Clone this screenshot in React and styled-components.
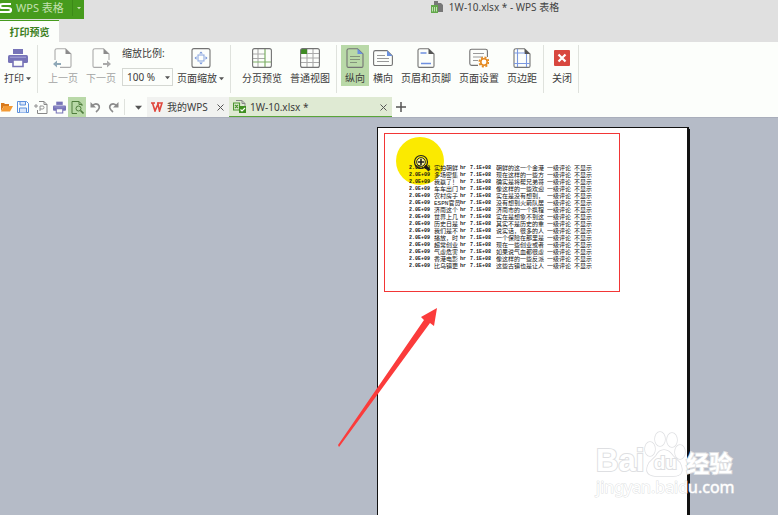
import styled, { createGlobalStyle } from "styled-components";
import { useState } from "react";

const GlobalStyle = createGlobalStyle`
  * {
    box-sizing: border-box;
  }
  body {
    margin: 0;
    overflow: hidden;
    font-family: "Noto Sans", "Noto Sans CJK SC", sans-serif;
    font-size: 10px;
    line-height: 14px;
    color: #3c3c3c;
  }
  button, select {
    font: inherit;
    color: inherit;
    border: 0;
    padding: 0;
    background: none;
  }
`;

const Page = styled.div`
  display: flex;
  flex-direction: column;
  height: 100vh;
  background: #e0e0e0;
`;

const TitleBar = styled.header`
  display: grid;
  grid-template-columns: 1fr auto 1fr;
  align-items: start;
  height: 20px;
`;

const Brand = styled.button`
  justify-self: start;
  display: flex;
  align-items: center;
  width: 84px;
  height: 19px;
  padding-bottom: 3px;
  background: #469b1d;
  color: #c3e0b0;
  font-size: 11px;
  gap: 4px;
  white-space: nowrap;
`;

const BrandMenu = styled.span`
  display: flex;
  align-items: center;
  margin-left: auto;
  padding: 0 3px 0 4px;
  height: 16px;
  border-left: 1px solid #3c8a18;
`;

const Title = styled.h1`
  display: flex;
  gap: 6px;
  margin: 0 0 0 212px;
  font-size: 10px;
  font-weight: 400;
  line-height: 14px;
  color: #444;
  white-space: nowrap;
`;

const RibbonTabs = styled.nav`
  display: flex;
  height: 22px;
`;

const RibbonTab = styled.button`
  width: 59px;
  border-top: 1px solid #469b1d;
  background: #fcfefb;
  color: #3c7f1e;
  font-weight: 700;
`;

const Ribbon = styled.div`
  display: flex;
  align-items: flex-start;
  height: 55px;
  padding-top: 3px;
  background: #fcfefb;
`;

const Divider = styled.span`
  width: 1px;
  height: ${(p) => p.height || 48}px;
  margin: 0 4px 0 2px;
  background: #dfe2dd;
`;

const Group = styled.div`
  display: flex;
  padding-right: ${(p) => p.$end || 0}px;
`;

const Tool = styled.button`
  display: flex;
  flex-direction: column;
  align-items: center;
  gap: 3px;
  height: 41px;
  padding: 3px 4px 0;
  background: ${(p) => (p.$active ? "#b9d9a8" : "transparent")};
  color: ${(p) => (p.disabled ? "#a3a3a3" : "#3c3c3c")};
  white-space: nowrap;
`;

const ToolLabel = styled.span`
  display: flex;
  align-items: center;
  gap: 2px;
`;

const Scale = styled.div`
  display: flex;
  flex-direction: column;
  gap: 8px;
  padding: 1px 0 0 2px;
`;

const SelectBox = styled.span`
  display: flex;
  align-items: center;
  width: 51px;
  height: 18px;
  padding: 0 2px 0 4px;
  border: 1px solid #d5d8d3;
`;

const Select = styled.select`
  flex: 1;
  min-width: 0;
  appearance: none;
  outline: none;
`;

const QuickBar = styled.div`
  display: flex;
  align-items: center;
  height: 20px;
  background: #fcfefb;
`;

const QuickButton = styled.button`
  display: grid;
  place-items: center;
  width: ${(p) => (p.$narrow ? 14 : 18)}px;
  height: 20px;
  background: ${(p) => (p.$active ? "#b9d9a8" : "transparent")};
`;

const DocTab = styled.div`
  display: flex;
  align-items: center;
  gap: 4px;
  width: ${(p) => p.width}px;
  height: 20px;
  padding: 0 5px 0 4px;
  background: ${(p) => (p.$active ? "#dfead3" : "#f1f2f0")};
  border-bottom: 1px solid ${(p) => (p.$active ? "#5aa53a" : "#f1f2f0")};
`;

const TabName = styled.button`
  flex: 1;
  text-align: left;
  white-space: nowrap;
`;

const Workspace = styled.main`
  position: relative;
  flex: 1;
  min-height: 0;
  overflow: hidden;
  padding: 9px 0 0 377px;
  border-top: 1px solid #a9aebb;
  background: #b5bbc7;
`;

const Paper = styled.section`
  width: 312px;
  height: 440px;
  padding: 5px 6px;
  background: #fff;
  border: 1px solid #111;
  border-right-width: 2px;
  box-shadow: 1px 2px 0 #111;
`;

const PrintArea = styled.div`
  position: relative;
  width: 236px;
  height: 159px;
  padding: 31px 0 0 24px;
  border: 1px solid #f23636;
`;

const Sheet = styled.table`
  position: relative;
  table-layout: fixed;
  width: 186px;
  border-collapse: collapse;
  font-family: "Liberation Mono", "Noto Sans CJK SC", monospace;
  line-height: 7px;
  color: #111;
`;

const Cell = styled.td`
  height: 7px;
  padding: 0;
  overflow: hidden;
  white-space: nowrap;
  font-size: ${(p) => (p.$number ? 5 : 6)}px;
  font-weight: ${(p) => (p.$number ? 700 : 400)};
`;

const Highlight = styled.div`
  position: absolute;
  left: 11px;
  top: 3px;
  width: 48px;
  height: 48px;
  padding: 4px 0 0 3px;
  display: grid;
  place-items: center;
  border-radius: 50%;
  background: #fbea00;
`;

const Arrow = styled.svg`
  position: absolute;
  left: 337px;
  top: 190px;
`;

const Watermark = styled.div`
  position: absolute;
  left: 596px;
  top: 313px;
  color: #fff;
  paint-order: stroke fill;
`;

const WatermarkLogo = styled.div`
  display: flex;
  align-items: flex-end;
  height: 46px;
  font-family: "Liberation Sans", "Noto Sans CJK SC", sans-serif;
  font-size: 31px;
  font-weight: 700;
  line-height: 32px;
  -webkit-text-stroke: 2px #dedfe2;
`;

const Paw = styled.span`
  display: grid;
  width: 42px;
  height: 46px;
  font-size: 19px;
  line-height: 20px;
  > * {
    grid-area: 1 / 1;
  }
  > span {
    align-self: end;
    justify-self: center;
    padding-bottom: 4px;
  }
`;

const WatermarkName = styled.span`
  font-size: 23px;
  line-height: 26px;
`;

const WatermarkUrl = styled.div`
  font-size: 16px;
  font-weight: 400;
  line-height: 20px;
  -webkit-text-stroke: 1px #dedfe2;
`;

const Caret = ({ color = "#555", size = 5 }) => (
  <svg width={size} height={size} viewBox="0 0 6 6">
    <path d="M0 1.5h6L3 5z" fill={color} />
  </svg>
);

const Icon = ({ size = 20, children }) => (
  <svg
    width={size}
    height={size}
    viewBox="0 0 20 20"
    fill="none"
    stroke="#737373"
    strokeWidth="1.1"
  >
    {children}
  </svg>
);

const PrintIcon = ({ size }) => (
  <Icon size={size}>
    <path d="M5 1h10v5H5z" fill="#7774b8" stroke="none" />
    <rect x="0" y="7" width="20" height="8" rx="1.5" fill="#7774b8" stroke="none" />
    <path d="M2 9.2h16" stroke="#a5a3d6" />
    <path d="M5 12h10v6.5H5z" fill="#fcfefb" stroke="#7774b8" strokeWidth="1.6" />
  </Icon>
);

const PageOutline = ({ corner = "#8b8b8b" }) => (
  <>
    <path d="M4 .7h8.5L18 6v12q0 1.4-1.4 1.4H3.4Q2 19.4 2 18V2.3Q2 .7 4 .7z" />
    <path d="M12.5 .7V6H18z" fill={corner} stroke="none" />
  </>
);

const PrevIcon = () => (
  <Icon>
    <path d="M2 12V2.3Q2 .7 4 .7h8.5L18 6v12q0 1.4-1.4 1.4H7" stroke="#aaa" />
    <path d="M12.5 .7V6H18z" fill="#8b8b8b" stroke="none" />
    <path d="M0 16l4-3.5v2.5h4v2H4v2.5z" fill="#8fa9b8" stroke="none" />
  </Icon>
);

const NextIcon = () => (
  <Icon>
    <path d="M11 19.4H3.4Q2 19.4 2 18V2.3Q2 .7 4 .7h8.5L18 6v6" stroke="#aaa" />
    <path d="M12.5 .7V6H18z" fill="#8b8b8b" stroke="none" />
    <path d="M20 16l-4-3.5v2.5h-4v2h4v2.5z" fill="#aaa" stroke="none" />
  </Icon>
);

const PageZoomIcon = () => (
  <Icon>
    <rect x="1" y=".6" width="18" height="18.8" rx="2" />
    <rect x="7" y="7" width="6" height="6" stroke="#8fa9e0" />
    <path d="M10 3.5l1.800 2H8.200zM10 16.500l1.800-2H8.200zM3.500 10l2-1.800v3.600zM16.500 10l-2-1.800v3.600z" fill="#6f90d8" stroke="none" />
  </Icon>
);

const PageBreakIcon = () => (
  <Icon>
    <path d="M6 1v18M1 6h12M1 10.5h12" stroke="#aaa" />
    <path d="M13 1v13M1 14h18M13 14v5" stroke="#7db066" strokeWidth="1.2" />
    <rect x=".6" y=".6" width="18.8" height="18.8" rx="2" />
  </Icon>
);

const NormalViewIcon = () => (
  <Icon>
    <path d="M7 1v18M13 1v18M1 5.5h18M1 10h18M1 14.5h18" stroke="#aaa" />
    <path d="M1 1h6v5H1z" fill="#3f8b24" stroke="none" />
    <rect x=".6" y=".6" width="18.8" height="18.8" rx="2" />
  </Icon>
);

const PortraitIcon = () => (
  <Icon>
    <PageOutline corner="#6a91e0" />
    <path d="M5 8.5h10M5 11.5h10M5 14.5h7" stroke="#83947c" />
  </Icon>
);

const LandscapeIcon = () => (
  <Icon>
    <path d="M2.5 2.6H14L19.4 8v8q0 1.5-1.5 1.5H2.1Q.6 17.5 .6 16V4.5Q.6 2.6 2.5 2.6z" />
    <path d="M14 2.6V8h5.4z" fill="#6a91e0" stroke="none" />
    <path d="M4 7.5h8M4 10.5h12M4 13.5h12" stroke="#999" />
  </Icon>
);

const HeaderFooterIcon = () => (
  <Icon>
    <PageOutline corner="#555" />
    <path d="M4.5 5h6M5 15.5h10" stroke="#6f90e0" strokeWidth="1.7" />
  </Icon>
);

const PageSetupIcon = () => (
  <Icon>
    <path d="M9 17.4H2.6Q.8 17.4 .8 15.5V3Q.8 1.3 2.6 1.3h14q1.8 0 1.8 1.7v6" />
    <path d="M4 5.5h11M4 9h10M4 12.5h5" stroke="#999" />
    <circle cx="15" cy="14" r="4.6" stroke="#e58a20" strokeWidth="1.8" strokeDasharray="2 1.6" />
    <circle cx="15" cy="14" r="3.2" stroke="#e58a20" strokeWidth="1.6" fill="#fff" />
  </Icon>
);

const MarginIcon = () => (
  <Icon>
    <PageOutline corner="#555" />
    <path d="M5.5 1v18M14.5 6v13M2 5h11M2 15.5h16" stroke="#7b98df" />
  </Icon>
);

const CloseIcon = () => (
  <Icon>
    <rect x="2" y="2" width="16" height="16" rx="1" fill="#d8473f" stroke="none" />
    <path d="M6.5 6.5l7 7M13.5 6.5l-7 7" stroke="#fff" strokeWidth="2.2" />
  </Icon>
);

const FolderIcon = () => (
  <svg width="12" height="12" viewBox="0 0 12 12">
    <path d="M0 2h3l1 1h4v2H3L0 10z" fill="#d87a1c" />
    <path d="M3 5h9l-3 5.5H0z" fill="#f39a34" />
  </svg>
);

const SaveIcon = () => (
  <svg width="12" height="12" viewBox="0 0 12 12" fill="none" stroke="#5b8fdc">
    <path d="M.5 .5h9l2 2v9H.5z" />
    <path d="M3 .5h5.5v3.500H3zM2.500 11.500V7h7v4.500" fill="#d7e5fa" />
  </svg>
);

const ExportIcon = () => (
  <svg width="14" height="13" viewBox="0 0 14 13" fill="none" stroke="#888">
    <path d="M5 .5h5l3 3v9H3.5V9M10 .5v3h3" />
    <path d="M6 10V5h2.5q1.5 0 1.5 1.5T8.500 8H6M0 5h4M2 3v4" strokeWidth=".9" />
  </svg>
);

const PreviewIcon = () => (
  <svg width="13" height="13" viewBox="0 0 13 13" fill="none" stroke="#4f7d3d">
    <path d="M6 12.5H1V.5h7l3 3V5M8 .5v3h3" />
    <circle cx="7.5" cy="7.5" r="2.5" />
    <path d="M9.5 9.5l3 3" strokeWidth="1.6" />
  </svg>
);

const UndoIcon = ({ flip }) => (
  <svg width="11" height="12" viewBox="0 0 11 12" fill="none" stroke="#8b8b8b" strokeWidth="1.7">
    <g transform={flip ? "translate(11 0) scale(-1 1)" : undefined}>
      <path d="M2 5q3-3.5 6-1.5 3.5 3-2 7.5" />
      <path d="M.5 1v5.5H6z" fill="#8b8b8b" stroke="none" />
    </g>
  </svg>
);

const CrossIcon = () => (
  <svg width="7" height="7" viewBox="0 0 7 7" stroke="#555">
    <path d="M.5 .5l6 6M6.5 .5l-6 6" />
  </svg>
);

const tools = [
  { end: 2, items: [{ label: "打印", icon: PrintIcon, menu: true }] },
  {
    end: 3,
    items: [
      { label: "上一页", icon: PrevIcon, disabled: true },
      { label: "下一页", icon: NextIcon, disabled: true },
      { scale: true },
      { label: "页面缩放", icon: PageZoomIcon, menu: true },
    ],
  },
  {
    items: [
      { label: "分页预览", icon: PageBreakIcon },
      { label: "普通视图", icon: NormalViewIcon },
    ],
  },
  {
    items: [
      { label: "纵向", icon: PortraitIcon, orientation: true },
      { label: "横向", icon: LandscapeIcon, orientation: true },
      { label: "页眉和页脚", icon: HeaderFooterIcon },
      { label: "页面设置", icon: PageSetupIcon },
      { label: "页边距", icon: MarginIcon },
    ],
  },
  { items: [{ label: "关闭", icon: CloseIcon }] },
];

const rows = [
  ["实拍朝鲜", "朝鲜的这一个金港"],
  ["多场密集", "现在这样的一些方"],
  ["我赢了！", "确实是将帮兄弟哥"],
  ["车车出门", "像这样的一些欢迎"],
  ["农村房子", "实在是没有想到，"],
  ["ESPN官员", "没有想到火箭队居"],
  ["济南这个", "济南市的一个携程"],
  ["世界上几", "实在是想象不到这"],
  ["历史日是", "其实不是历史的重"],
  ["我们是不", "说实话，很多的人"],
  ["播放，时", "一个保险在那里是"],
  ["超常创业", "现在一些创业或者"],
  ["气虚危害", "如果说气血都很虚"],
  ["香港电影", "像这样的一些反派"],
  ["比乌镇更", "这些古镇也是让人"],
];

const columns = [25, 26, 10, 26, 51, 27, 21];

export default function App() {
  const [orientation, setOrientation] = useState("纵向");
  const [scale, setScale] = useState("100 %");

  return (
    <Page>
      <GlobalStyle />
      <TitleBar>
        <Brand>
          <svg width="12" height="12" viewBox="0 0 12 12" fill="none" stroke="#fff" strokeWidth="2.2">
            <path d="M11 2H3Q0 2 0 4t3 2h5q3 0 3 2t-3 2H0" />
          </svg>
          WPS 表格
          <BrandMenu>
            <Caret color="#c3e0b0" size={4} />
          </BrandMenu>
        </Brand>
        <Title>
          <svg width="12" height="13" viewBox="0 0 12 13">
            <path d="M3 1h4v4H3zM6 3h4l2 2v7H6z" fill="#777" />
            <path d="M0 5h7v8H0z" fill="#62a84a" />
            <path d="M1.5 7v4.5M3.5 7v4.5M5.5 7v4.5" stroke="#d9efcf" strokeWidth=".8" />
          </svg>
          1W-10.xlsx * - WPS 表格
        </Title>
      </TitleBar>
      <RibbonTabs>
        <RibbonTab>打印预览</RibbonTab>
      </RibbonTabs>
      <Ribbon>
        {tools.map((group, g) => (
          <Group key={g} $end={group.end}>
            {group.items.map((item) =>
              item.scale ? (
                <Scale key="scale">
                  <label htmlFor="scale">缩放比例:</label>
                  <SelectBox>
                    <Select id="scale" value={scale} onChange={(e) => setScale(e.target.value)}>
                      <option>100 %</option>
                      <option>75 %</option>
                      <option>50 %</option>
                    </Select>
                    <Caret />
                  </SelectBox>
                </Scale>
              ) : (
                <Tool
                  key={item.label}
                  disabled={item.disabled}
                  $active={item.orientation && item.label === orientation}
                  onClick={() => item.orientation && setOrientation(item.label)}
                >
                  <item.icon />
                  <ToolLabel>
                    {item.label}
                    {item.menu && <Caret />}
                  </ToolLabel>
                </Tool>
              )
            )}
            <Divider />
          </Group>
        ))}
      </Ribbon>
      <QuickBar>
        <QuickButton aria-label="打开" $narrow>
          <FolderIcon />
        </QuickButton>
        <QuickButton aria-label="保存">
          <SaveIcon />
        </QuickButton>
        <QuickButton aria-label="输出为PDF">
          <ExportIcon />
        </QuickButton>
        <QuickButton aria-label="打印">
          <PrintIcon size={13} />
        </QuickButton>
        <QuickButton aria-label="打印预览" $active>
          <PreviewIcon />
        </QuickButton>
        <QuickButton aria-label="撤销">
          <UndoIcon />
        </QuickButton>
        <QuickButton aria-label="恢复">
          <UndoIcon flip />
        </QuickButton>
        <Divider height={16} />
        <QuickButton aria-label="更多">
          <Caret size={7} />
        </QuickButton>
        <DocTab width={82}>
          <svg width="12" height="10" viewBox="0 0 12 10" fill="none" stroke="#e0463c" strokeWidth="1.6">
            <path d="M0 1h4M1.5 1l2.5 8 3-7 1.5 7L11 1H6" />
          </svg>
          <TabName>我的WPS</TabName>
          <button aria-label="关闭 我的WPS">
            <CrossIcon />
          </button>
        </DocTab>
        <DocTab width={163} $active>
          <svg width="13" height="13" viewBox="0 0 13 13" fill="none" stroke="#4c9630">
            <path d="M3 .5h6l3 3V6M9 .5v3h3" stroke="#888" />
            <path d="M.5 3h6v7h-6zM2 5l3 3M5 5L2 8" strokeWidth="1.2" />
            <path d="M6 6h7v7H6z" fill="#3f9020" stroke="none" />
            <path d="M7.5 9.5L9 11l3-3" stroke="#fff" strokeWidth="1.2" />
          </svg>
          <TabName>1W-10.xlsx *</TabName>
          <button aria-label="关闭 1W-10.xlsx">
            <CrossIcon />
          </button>
        </DocTab>
        <QuickButton aria-label="新建">
          <svg width="10" height="10" viewBox="0 0 10 10" stroke="#555" strokeWidth="1.5">
            <path d="M5 0v10M0 5h10" />
          </svg>
        </QuickButton>
      </QuickBar>
      <Workspace>
        <Paper>
          <PrintArea>
            <Highlight>
              <svg width="18" height="18" viewBox="0 0 18 18" fill="none" stroke="#222">
                <circle cx="8" cy="8" r="6.5" strokeWidth="1.2" />
                <circle cx="8" cy="8" r="4.3" fill="#fff7a0" />
                <path d="M8 5v6M5 8h6" strokeWidth="1.6" />
                <path d="M12 12l4.5 4.5" strokeWidth="3" />
              </svg>
            </Highlight>
            <Sheet>
              <colgroup>
                {columns.map((width, i) => (
                  <col key={i} width={width} />
                ))}
              </colgroup>
              <tbody>
                {rows.map(([name, text]) => (
                  <tr key={name}>
                    <Cell $number>2.0E+09</Cell>
                    <Cell>{name}</Cell>
                    <Cell $number>hr</Cell>
                    <Cell $number>7.1E+08</Cell>
                    <Cell>{text}</Cell>
                    <Cell>一级评论</Cell>
                    <Cell>不显示</Cell>
                  </tr>
                ))}
              </tbody>
            </Sheet>
          </PrintArea>
        </Paper>
        <Arrow width="102" height="140" viewBox="0 0 102 140">
          <path d="M100 0L84 9l3 3L1 137l1 2L93 15l4 3z" fill="#fb3b3b" />
        </Arrow>
        <Watermark>
          <WatermarkLogo>
            Bai
            <Paw>
              <svg width="42" height="46" viewBox="0 0 42 46" fill="#fff" stroke="#dedfe2" strokeWidth="1.5">
                <ellipse cx="6" cy="18" rx="5" ry="7" />
                <ellipse cx="16" cy="8" rx="5" ry="7" />
                <ellipse cx="28" cy="9" rx="5" ry="7" />
                <ellipse cx="36" cy="21" rx="5" ry="7" />
                <path d="M20 19q5 0 9 6l7 7q6 13-7 13H11q-12-1-6-13l7-7q3-6 8-6z" />
              </svg>
              <span>du</span>
            </Paw>
            <WatermarkName>经验</WatermarkName>
          </WatermarkLogo>
          <WatermarkUrl>jingyan.baidu.com</WatermarkUrl>
        </Watermark>
      </Workspace>
    </Page>
  );
}
